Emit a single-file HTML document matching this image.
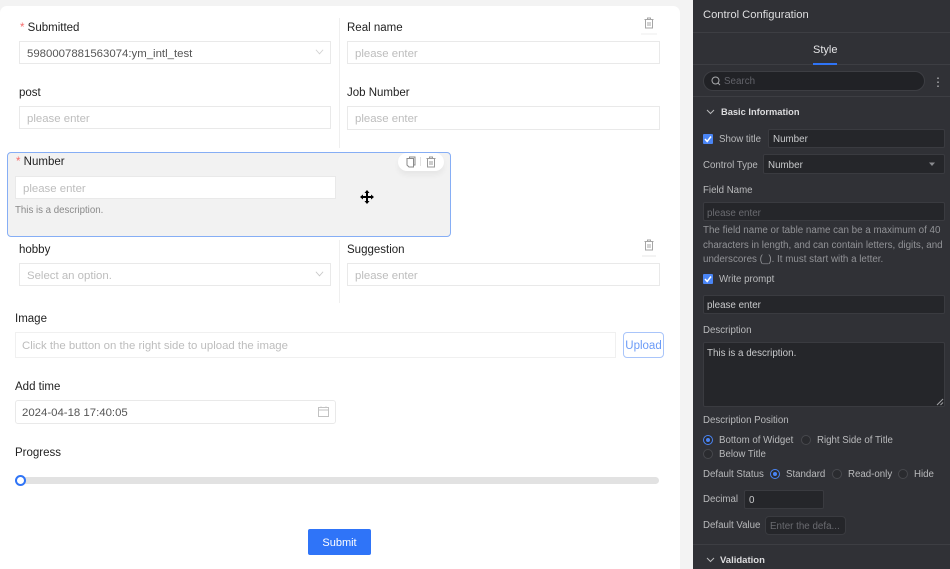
<!DOCTYPE html>
<html>
<head>
<meta charset="utf-8">
<style>
html,body{margin:0;padding:0;width:950px;height:569px;overflow:hidden;background:#f3f3f3;font-family:"Liberation Sans",sans-serif;}
.a{position:absolute;box-sizing:border-box;white-space:nowrap;}
.lb{font-size:11.5px;color:#222;line-height:16px;}
.in{background:#fff;border:1px solid #e9e9e9;font-size:11.4px;line-height:23px;padding-left:7px;padding-top:1px;color:#bdbdbd;}
.v{color:#555;}
.dl{font-size:9.7px;line-height:18px;color:#b9babc;}
.db{background:#25262a;border:1px solid #3a3b40;border-radius:2px;font-size:9.8px;color:#c9cacc;padding-left:3px;line-height:19px;padding-top:1px;}
.r{width:10px;height:10px;border-radius:50%;border:1px solid #47484d;background:#2a2b2f;}
.r.on{border:1px solid #4a85f5;background:#2a2b2f;}
.r.on:after{content:"";position:absolute;left:2px;top:2px;width:4px;height:4px;border-radius:50%;background:#4a85f5;}
.cb{width:10px;height:10px;background:#4a85f5;border-radius:1px;}
.hr{left:693px;width:257px;height:1px;background:#3d3e43;}
</style>
</head>
<body>
<div class="a" style="left:0;top:6px;width:680px;height:563px;background:#fff;border-radius:7px 7px 0 0;"></div>
<div class="a" style="left:339px;top:18px;width:1px;height:130px;background:#efefef;"></div>
<div class="a" style="left:339px;top:240px;width:1px;height:63px;background:#efefef;"></div>

<div class="a lb" style="left:20px;top:20px;"><span style="color:#f56c6c;">*</span> Submitted</div>
<div class="a in v" style="left:19px;top:41px;width:312px;height:23px;">5980007881563074:ym_intl_test</div>
<svg class="a" style="left:315px;top:48px;" width="9" height="8" viewBox="0 0 10 8"><path d="M1 1.500L5 6L9 1.500" fill="none" stroke="#d2d2d2" stroke-width="1"/></svg>
<div class="a lb" style="left:347px;top:20px;">Real name</div>
<div class="a in" style="left:347px;top:41px;width:313px;height:23px;">please enter</div>
<svg class="a" style="left:644px;top:17px;" width="10" height="12" viewBox="0 0 10 12"><path d="M.5 2.500H9.500M3.500 2.500V1H6.500V2.500M1.500 2.500V11H8.500V2.500M4 5V9M6 5V9" fill="none" stroke="#a5a5a5" stroke-width="1"/></svg>
<div class="a" style="left:641px;top:33px;width:16px;height:2px;background:#f6f6f6;"></div>

<div class="a lb" style="left:19px;top:85px;">post</div>
<div class="a in" style="left:19px;top:106px;width:312px;height:23px;">please enter</div>
<div class="a lb" style="left:347px;top:85px;">Job Number</div>
<div class="a in" style="left:347px;top:106px;width:313px;height:24px;">please enter</div>

<div class="a" style="left:7px;top:152px;width:444px;height:85px;background:#f2f2f2;border:1px solid #86aef5;border-radius:4px;"></div>
<div class="a lb" style="left:16px;top:154px;"><span style="color:#f56c6c;">*</span> Number</div>
<div class="a in" style="left:15px;top:176px;width:321px;height:23px;">please enter</div>
<div class="a" style="left:15px;top:205px;font-size:9.7px;line-height:12px;color:#8a8a8a;">This is a description.</div>
<div class="a" style="left:398px;top:153px;width:46px;height:18px;background:#fff;border-radius:9px;box-shadow:0 4px 6px rgba(0,0,0,.05);"></div>
<svg class="a" style="left:406px;top:156px;" width="10" height="12" viewBox="0 0 10 12"><path d="M3.500 2.500V1H9V9H7.500M1 2.500H7.500V11H3L1 9Z" fill="none" stroke="#8a8a8a" stroke-width="1"/></svg>
<div class="a" style="left:420px;top:157px;width:1px;height:9px;background:#e2e2e2;"></div>
<svg class="a" style="left:426px;top:156px;" width="10" height="12" viewBox="0 0 10 12"><path d="M.5 2.500H9.500M3.500 2.500V1H6.500V2.500M1.500 2.500V11H8.500V2.500M4 5V9M6 5V9" fill="none" stroke="#9a9a9a" stroke-width="1"/></svg>
<svg class="a" style="left:360px;top:190px;" width="14" height="14" viewBox="0 0 14 14"><path d="M7 1V13M1 7H13" stroke="#000" stroke-width="2"/><path d="M7 0L9.500 3H4.500ZM7 14L9.500 11H4.500ZM0 7L3 4.500V9.500ZM14 7L11 4.500V9.500Z" fill="#000"/></svg>

<div class="a lb" style="left:19px;top:242px;">hobby</div>
<div class="a in" style="left:19px;top:263px;width:312px;height:23px;">Select an option.</div>
<svg class="a" style="left:315px;top:270px;" width="9" height="8" viewBox="0 0 10 8"><path d="M1 1.500L5 6L9 1.500" fill="none" stroke="#c8c8c8" stroke-width="1"/></svg>
<div class="a lb" style="left:347px;top:242px;">Suggestion</div>
<div class="a in" style="left:347px;top:263px;width:313px;height:23px;">please enter</div>
<svg class="a" style="left:644px;top:239px;" width="10" height="12" viewBox="0 0 10 12"><path d="M.5 2.500H9.500M3.500 2.500V1H6.500V2.500M1.500 2.500V11H8.500V2.500M4 5V9M6 5V9" fill="none" stroke="#a5a5a5" stroke-width="1"/></svg>
<div class="a" style="left:642px;top:255px;width:14px;height:2px;background:#f3f3f3;"></div>

<div class="a lb" style="left:15px;top:311px;">Image</div>
<div class="a in" style="left:15px;top:332px;width:601px;height:26px;line-height:26px;padding-left:6px;padding-top:0;border-color:#f0f0f0;">Click the button on the right side to upload the image</div>
<div class="a" style="left:623px;top:332px;width:41px;height:26px;border:1px solid #a9c5fa;border-radius:4px;color:#6b9bf7;font-size:11.5px;line-height:26px;text-align:center;">Upload</div>

<div class="a lb" style="left:15px;top:379px;">Add time</div>
<div class="a in v" style="left:15px;top:400px;width:321px;height:24px;line-height:24px;padding-left:6px;padding-top:0;border-radius:3px;">2024-04-18 17:40:05</div>
<svg class="a" style="left:318px;top:406px;" width="11" height="11" viewBox="0 0 11 11"><path d="M.5 1.500H10.500V10.500H.5ZM.5 4H10.500M3 .5V2M8 .5V2" fill="none" stroke="#c2c2c2" stroke-width="1"/></svg>

<div class="a lb" style="left:15px;top:445px;">Progress</div>
<div class="a" style="left:20px;top:477px;width:639px;height:7px;background:#e2e2e2;border-radius:4px;"></div>
<div class="a" style="left:15px;top:475px;width:11px;height:11px;background:#fff;border:2px solid #2f74f6;border-radius:50%;"></div>

<div class="a" style="left:308px;top:529px;width:63px;height:26px;background:#2f74f8;border-radius:2px;color:#fff;font-size:11px;line-height:28px;text-align:center;">Submit</div>

<div class="a" style="left:693px;top:0;width:257px;height:569px;background:#303136;"></div>
<div class="a" style="left:703px;top:8px;font-size:11.2px;line-height:14px;color:#dedee0;">Control Configuration</div>
<div class="a hr" style="top:32px;"></div>
<div class="a" style="left:813px;top:43px;font-size:11px;line-height:14px;color:#e4e4e6;">Style</div>
<div class="a hr" style="top:64px;"></div>
<div class="a" style="left:813px;top:63px;width:24px;height:2px;background:#2f74f6;"></div>
<div class="a" style="left:703px;top:71px;width:222px;height:20px;background:#212226;border:1px solid #3d3e43;border-radius:10px;font-size:9.8px;line-height:19px;color:#62636a;padding-left:20px;">Search</div>
<svg class="a" style="left:711px;top:76px;" width="10" height="10" viewBox="0 0 10 10"><circle cx="4.500" cy="4.500" r="3.500" fill="none" stroke="#a8a9ac" stroke-width="1"/><path d="M7 7L9 9" stroke="#a8a9ac" stroke-width="1"/></svg>
<svg class="a" style="left:936px;top:76px;" width="4" height="12" viewBox="0 0 4 12"><path d="M2 1.500V3M2 5.500V7M2 9.500V11" stroke="#a8a9ac" stroke-width="1.500"/></svg>
<div class="a hr" style="top:96px;"></div>

<svg class="a" style="left:706px;top:109px;" width="9" height="6" viewBox="0 0 9 6"><path d="M1 1L4.500 4.500L8 1" fill="none" stroke="#b9babc" stroke-width="1"/></svg>
<div class="a" style="left:721px;top:105px;font-size:9.3px;font-weight:bold;line-height:14px;color:#dcdcde;">Basic Information</div>

<div class="a cb" style="left:703px;top:134px;"></div>
<svg class="a" style="left:703px;top:134px;" width="10" height="10" viewBox="0 0 10 10"><path d="M2 5L4.200 7.500L8 2.500" fill="none" stroke="#fff" stroke-width="1.500"/></svg>
<div class="a dl" style="left:719px;top:131px;">Show title</div>
<div class="a db" style="left:768px;top:129px;width:177px;height:19px;padding-left:4px;line-height:18px;">Number</div>
<div class="a dl" style="left:703px;top:157px;">Control Type</div>
<div class="a db" style="left:763px;top:154px;width:182px;height:20px;padding-left:4px;">Number</div>
<svg class="a" style="left:928px;top:162px;" width="8" height="5" viewBox="0 0 8 5"><path d="M1 .5H7L4 4Z" fill="#8a8b8f"/></svg>

<div class="a dl" style="left:703px;top:182px;">Field Name</div>
<div class="a db" style="left:703px;top:202px;width:242px;height:19px;color:#6a6b70;">please enter</div>
<div class="a" style="left:703px;top:224px;width:245px;font-size:9.8px;line-height:14.500px;color:#929397;white-space:normal;">The field name or table name can be a maximum of 40 characters in length, and can contain letters, digits, and underscores (_). It must start with a letter.</div>
<div class="a cb" style="left:703px;top:274px;"></div>
<svg class="a" style="left:703px;top:274px;" width="10" height="10" viewBox="0 0 10 10"><path d="M2 5L4.200 7.500L8 2.500" fill="none" stroke="#fff" stroke-width="1.500"/></svg>
<div class="a dl" style="left:719px;top:271px;">Write prompt</div>
<div class="a db" style="left:703px;top:295px;width:242px;height:19px;line-height:18px;">please enter</div>
<div class="a dl" style="left:703px;top:322px;">Description</div>
<div class="a db" style="left:703px;top:342px;width:242px;height:65px;line-height:19px;">This is a description.</div>
<svg class="a" style="left:936px;top:398px;" width="8" height="8" viewBox="0 0 8 8"><path d="M1 7L7 1M4.500 7L7 4.500" stroke="#a0a1a4" stroke-width="1"/></svg>

<div class="a dl" style="left:703px;top:412px;">Description Position</div>
<div class="a r on" style="left:703px;top:435px;"></div>
<div class="a dl" style="left:719px;top:432px;">Bottom of Widget</div>
<div class="a r" style="left:801px;top:435px;"></div>
<div class="a dl" style="left:817px;top:432px;">Right Side of Title</div>
<div class="a r" style="left:703px;top:449px;"></div>
<div class="a dl" style="left:719px;top:446px;">Below Title</div>

<div class="a dl" style="left:703px;top:466px;">Default Status</div>
<div class="a r on" style="left:770px;top:469px;"></div>
<div class="a dl" style="left:786px;top:466px;">Standard</div>
<div class="a r" style="left:832px;top:469px;"></div>
<div class="a dl" style="left:848px;top:466px;">Read-only</div>
<div class="a r" style="left:898px;top:469px;"></div>
<div class="a dl" style="left:914px;top:466px;">Hide</div>

<div class="a dl" style="left:703px;top:491px;">Decimal</div>
<div class="a db" style="left:744px;top:490px;width:80px;height:19px;padding-left:4px;line-height:18px;">0</div>
<div class="a dl" style="left:703px;top:517px;">Default Value</div>
<div class="a db" style="left:765px;top:516px;width:81px;height:19px;border-radius:4px;color:#6a6b70;padding-left:4px;line-height:18px;">Enter the defa...</div>
<div class="a hr" style="top:544px;"></div>
<svg class="a" style="left:706px;top:557px;" width="9" height="6" viewBox="0 0 9 6"><path d="M1 1L4.500 4.500L8 1" fill="none" stroke="#b9babc" stroke-width="1"/></svg>
<div class="a" style="left:720px;top:554px;font-size:9.500px;font-weight:bold;line-height:14px;color:#dcdcde;">Validation</div>
</body>
</html>
